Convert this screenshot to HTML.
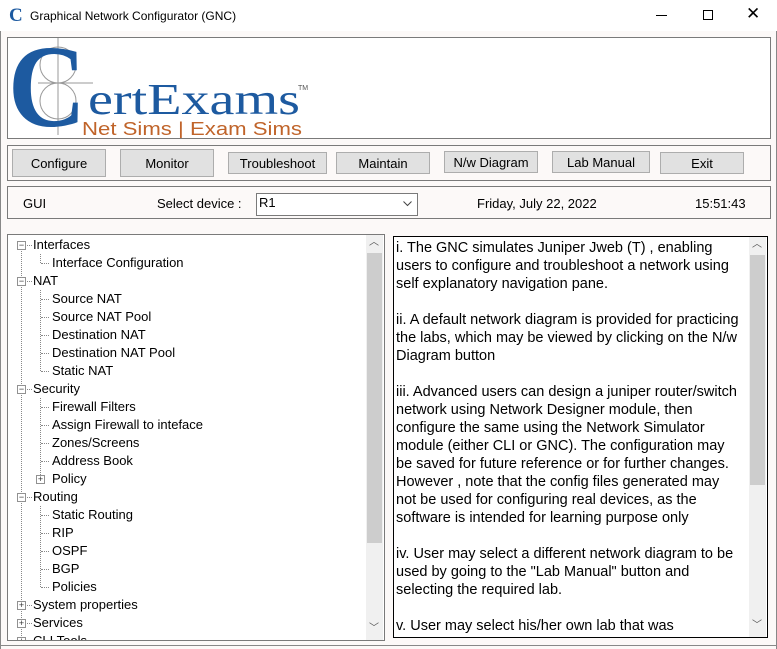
<!DOCTYPE html>
<html><head><style>
*{margin:0;padding:0;box-sizing:border-box}
body{width:777px;height:649px;overflow:hidden;background:#fcf9f8;font-family:"Liberation Sans",sans-serif;position:relative;color:#000}
.a{position:absolute}
.box{position:absolute;border:1px solid #7a7a7a}
.btn{position:absolute;background:#e1e1e1;border:1px solid #adadad;font-size:13px;text-align:center;display:flex;align-items:center;justify-content:center}
.t{position:absolute;font-size:13px;white-space:nowrap;line-height:18px}
.pm{position:absolute;width:9px;height:9px;border:1px solid #919191;background:#fff;font-size:9px;line-height:7px;text-align:center;color:#333}
.dv{position:absolute;border-left:1px dotted #888}
.dh{position:absolute;border-top:1px dotted #888;width:8px}
#txt{position:absolute;left:396px;width:352px;font-size:14.5px;line-height:18px;color:#000}
</style></head><body>
<div class="a" style="left:0;top:0;width:777px;height:31px;background:#fff"></div>
<div class="a" style="left:9px;top:5px;font:bold 19px 'Liberation Serif',serif;color:#1d5aa0">C</div>
<div class="t" style="left:30px;top:7px;font-size:12px">Graphical Network Configurator (GNC)</div>
<div class="a" style="left:656px;top:15px;width:11px;border-top:1px solid #000"></div>
<div class="a" style="left:703px;top:10px;width:10px;height:10px;border:1px solid #000"></div>
<div class="t" style="left:746px;top:5px;font-size:17px">✕</div>
<div class="a" style="left:0;top:31px;width:1px;height:618px;background:#888"></div>
<div class="a" style="left:776px;top:31px;width:1px;height:618px;background:#888"></div>

<div class="box" style="left:7px;top:37px;width:764px;height:102px;background:#fff"></div>
<svg class="a" style="left:8px;top:38px" width="300" height="100">
<circle cx="50" cy="27" r="18" fill="none" stroke="#999"/>
<circle cx="50" cy="63" r="18" fill="none" stroke="#999"/>
<line x1="50" y1="0" x2="50" y2="97" stroke="#999"/>
<line x1="30" y1="45" x2="85" y2="45" stroke="#999"/>
<text x="0" y="88" font-family="Liberation Serif" font-size="118" font-weight="bold" fill="#1d5aa0" textLength="78" lengthAdjust="spacingAndGlyphs">C</text>
<text x="80" y="76" font-family="Liberation Serif" font-size="44" fill="#1d5aa0" textLength="212" lengthAdjust="spacingAndGlyphs">ertExams</text>
<text x="290" y="52" font-family="Liberation Sans" font-size="7" fill="#555">TM</text>
<text x="74" y="97" font-family="Liberation Sans" font-size="18" fill="#c0642a" textLength="220" lengthAdjust="spacingAndGlyphs">Net Sims | Exam Sims</text>
</svg>

<div class="box" style="left:7px;top:145px;width:764px;height:36px"></div>
<div class="btn" style="left:12px;top:149px;width:94px;height:28px">Configure</div>
<div class="btn" style="left:120px;top:149px;width:94px;height:28px">Monitor</div>
<div class="btn" style="left:228px;top:152px;width:99px;height:22px">Troubleshoot</div>
<div class="btn" style="left:336px;top:152px;width:94px;height:22px">Maintain</div>
<div class="btn" style="left:444px;top:151px;width:94px;height:22px">N/w Diagram</div>
<div class="btn" style="left:552px;top:151px;width:98px;height:22px">Lab Manual</div>
<div class="btn" style="left:660px;top:152px;width:84px;height:22px">Exit</div>

<div class="box" style="left:7px;top:186px;width:764px;height:33px"></div>
<div class="t" style="left:23px;top:195px">GUI</div>
<div class="t" style="left:157px;top:195px">Select device :</div>
<div class="a" style="left:256px;top:193px;width:162px;height:23px;border:1px solid #7a7a7a;background:#fff"></div>
<div class="t" style="left:259px;top:194px">R1</div>
<svg class="a" style="left:403px;top:201px" width="9" height="6"><path d="M0.5 0.5L4.5 4.5L8.5 0.5" fill="none" stroke="#444"/></svg>
<div class="t" style="left:477px;top:195px">Friday, July 22, 2022</div>
<div class="t" style="left:695px;top:195px">15:51:43</div>

<div class="box" style="left:7px;top:234px;width:378px;height:407px;background:#fff"></div>
<div class="a" style="left:366px;top:235px;width:17px;height:405px;background:#f0f0f0"></div>
<div class="a" style="left:367px;top:253px;width:15px;height:290px;background:#cdcdcd"></div>
<div class="t" style="left:369px;top:234px;font-size:10px;color:#555">︿</div>
<div class="t" style="left:369px;top:620px;font-size:10px;color:#555">﹀</div>

<div class="a" style="left:8px;top:236px;width:358px;height:404px;overflow:hidden">
<div class="dv" style="left:13px;top:10px;height:400px"></div>
<div class="dv" style="left:32px;top:18px;height:9px"></div>
<div class="dv" style="left:32px;top:54px;height:81px"></div>
<div class="dv" style="left:32px;top:162px;height:81px"></div>
<div class="dv" style="left:32px;top:270px;height:81px"></div>
<div class="pm" style="left:9px;top:5px">−</div><div class="dh" style="left:19px;top:9px;width:5px"></div><div class="t" style="left:25px;top:0px">Interfaces</div>
<div class="dh" style="left:33px;top:27px"></div><div class="t" style="left:44px;top:18px">Interface Configuration</div>
<div class="pm" style="left:9px;top:41px">−</div><div class="dh" style="left:19px;top:45px;width:5px"></div><div class="t" style="left:25px;top:36px">NAT</div>
<div class="dh" style="left:33px;top:63px"></div><div class="t" style="left:44px;top:54px">Source NAT</div>
<div class="dh" style="left:33px;top:81px"></div><div class="t" style="left:44px;top:72px">Source NAT Pool</div>
<div class="dh" style="left:33px;top:99px"></div><div class="t" style="left:44px;top:90px">Destination NAT</div>
<div class="dh" style="left:33px;top:117px"></div><div class="t" style="left:44px;top:108px">Destination NAT Pool</div>
<div class="dh" style="left:33px;top:135px"></div><div class="t" style="left:44px;top:126px">Static NAT</div>
<div class="pm" style="left:9px;top:149px">−</div><div class="dh" style="left:19px;top:153px;width:5px"></div><div class="t" style="left:25px;top:144px">Security</div>
<div class="dh" style="left:33px;top:171px"></div><div class="t" style="left:44px;top:162px">Firewall Filters</div>
<div class="dh" style="left:33px;top:189px"></div><div class="t" style="left:44px;top:180px">Assign Firewall to inteface</div>
<div class="dh" style="left:33px;top:207px"></div><div class="t" style="left:44px;top:198px">Zones/Screens</div>
<div class="dh" style="left:33px;top:225px"></div><div class="t" style="left:44px;top:216px">Address Book</div>
<div class="pm" style="left:28px;top:239px">+</div><div class="t" style="left:44px;top:234px">Policy</div>
<div class="pm" style="left:9px;top:257px">−</div><div class="dh" style="left:19px;top:261px;width:5px"></div><div class="t" style="left:25px;top:252px">Routing</div>
<div class="dh" style="left:33px;top:279px"></div><div class="t" style="left:44px;top:270px">Static Routing</div>
<div class="dh" style="left:33px;top:297px"></div><div class="t" style="left:44px;top:288px">RIP</div>
<div class="dh" style="left:33px;top:315px"></div><div class="t" style="left:44px;top:306px">OSPF</div>
<div class="dh" style="left:33px;top:333px"></div><div class="t" style="left:44px;top:324px">BGP</div>
<div class="dh" style="left:33px;top:351px"></div><div class="t" style="left:44px;top:342px">Policies</div>
<div class="pm" style="left:9px;top:365px">+</div><div class="dh" style="left:19px;top:369px;width:5px"></div><div class="t" style="left:25px;top:360px">System properties</div>
<div class="pm" style="left:9px;top:383px">+</div><div class="dh" style="left:19px;top:387px;width:5px"></div><div class="t" style="left:25px;top:378px">Services</div>
<div class="pm" style="left:9px;top:401px">+</div><div class="t" style="left:25px;top:396px">CLI Tools</div>
</div>

<div class="a" style="left:393px;top:236px;width:375px;height:402px;border:1px solid #000;background:#fff"></div>
<div class="a" style="left:749px;top:237px;width:17px;height:400px;background:#f0f0f0"></div>
<div class="a" style="left:750px;top:255px;width:15px;height:230px;background:#cdcdcd"></div>
<div class="t" style="left:752px;top:236px;font-size:10px;color:#555">︿</div>
<div class="t" style="left:752px;top:617px;font-size:10px;color:#555">﹀</div>
<div id="txt" style="height:397px;overflow:hidden;top:239px">
i. The GNC simulates Juniper Jweb (T) , enabling<br>users to configure and troubleshoot a network using<br>self explanatory navigation pane.<br><br>ii. A default network diagram is provided for practicing<br>the labs, which may be viewed by clicking on the N/w<br>Diagram button<br><br>iii. Advanced users can design a juniper router/switch<br>network using Network Designer module, then<br>configure the same using the Network Simulator<br>module (either CLI or GNC). The configuration may<br>be saved for future reference or for further changes.<br>However , note that the config files generated may<br>not be used for configuring real devices, as the<br>software is intended for learning purpose only<br><br>iv. User may select a different network diagram to be<br>used by going to the "Lab Manual" button and<br>selecting the required lab.<br><br>v. User may select his/her own lab that was
</div>
<div class="a" style="left:0;top:645px;width:777px;height:1px;background:#888"></div>
</body></html>
